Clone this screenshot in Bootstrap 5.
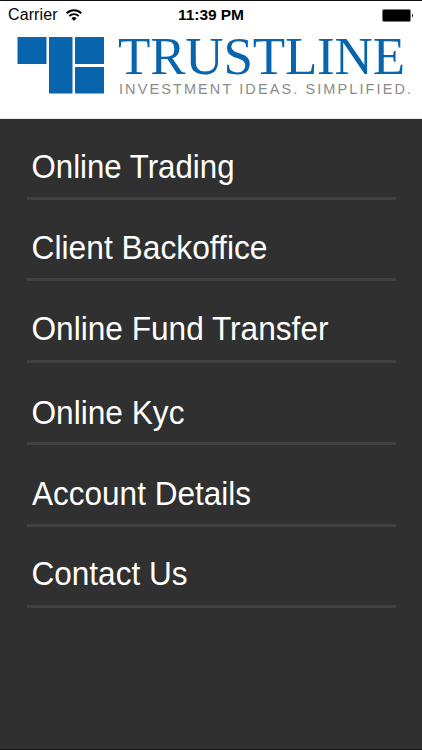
<!DOCTYPE html>
<html lang="en">
<head>
<meta charset="utf-8">
<meta name="viewport" content="width=device-width, initial-scale=1">
<title>Trustline</title>
<link href="https://cdn.jsdelivr.net/npm/bootstrap@5.3.0/dist/css/bootstrap.min.css" rel="stylesheet">
<style>
  body { background: #303030; font-family: "Liberation Sans", Arial, sans-serif; }
  .screen { height: 750px; border-top: 1px solid #111; border-bottom: 1px solid #111; }
  .brand-header { height: 118px; background: #fff; border-bottom: 1px solid #e8e8e8; }
  .status-bar { height: 28px; padding: 0 8px; font-size: 16px; color: #000; }
  .status-bar > div { flex: 1 1 0; }
  .carrier { letter-spacing: .1px; }
  .clock { font-size: 15.5px; letter-spacing: -.05px; }
  .brand-logo { overflow: visible; }
  .menu-list { padding: 0 26px 0 27px; }
  .menu-row { height: 81.75px; border-bottom: 3px solid #414042; padding: 0 5px 7px; color: #fff; font-size: 32.5px; line-height: 42px; }
  .menu-row:first-child { height: 80.5px; }
  .menu-row:hover { color: #fff; }
  .menu-row text { fill: #fff; }
</style>
</head>
<body>
<div class="screen d-flex flex-column overflow-hidden">
  <header class="brand-header flex-shrink-0">
    <div class="status-bar d-flex align-items-center">
      <div class="d-flex align-items-center">
        <span class="carrier">Carrier</span>
        <svg class="ms-2" width="16" height="13" viewBox="0 0 16 13" fill="none" stroke="#000" stroke-width="1.9">
          <path d="M.7 4.300a10.300 10.300 0 0 1 14.600 0M3.300 7.100a6.650 6.650 0 0 1 9.400 0"/>
          <path d="M8 12 5.400 9.200a3.700 3.700 0 0 1 5.200 0z" fill="#000" stroke="none"/>
        </svg>
      </div>
      <div class="clock text-center fw-bold text-nowrap">11:39 PM</div>
      <div class="d-flex justify-content-end">
        <svg width="32" height="13" viewBox="0 0 32 13">
          <rect x=".5" y=".5" width="28" height="12" rx="1.5" stroke="#777"/>
          <path d="M30 4.500q2 2 0 4z"/>
        </svg>
      </div>
    </div>
    <svg class="brand-logo d-block" width="422" height="88" viewBox="0 29 422 88" role="img" aria-label="Trustline">
      <g fill="#0865ad">
        <path d="M17.500 37h29v27h-29zM49 37h23.500v56.500H49zM75 37h29v27H75zM75 67h29v26.500H75z"/>
        <text x="118" y="74" font-family="Liberation Serif, Times New Roman, serif" font-size="53" textLength="287">TRUSTLINE</text>
      </g>
      <text x="119" y="93.500" fill="#8b8b8b" font-size="14.500" textLength="292">INVESTMENT IDEAS. SIMPLIFIED.</text>
    </svg>
  </header>
  <nav class="menu-list">
    <a href="#" class="menu-row d-flex align-items-end text-decoration-none"><svg width="340" height="42"><text x="-.5" y="29.500" textLength="203" lengthAdjust="spacingAndGlyphs">Online Trading</text></svg></a>
    <a href="#" class="menu-row d-flex align-items-end text-decoration-none"><svg width="340" height="42"><text x="-.5" y="29.500" textLength="236" lengthAdjust="spacingAndGlyphs">Client Backoffice</text></svg></a>
    <a href="#" class="menu-row d-flex align-items-end text-decoration-none"><svg width="340" height="42"><text x="-.5" y="28.500" textLength="297" lengthAdjust="spacingAndGlyphs">Online Fund Transfer</text></svg></a>
    <a href="#" class="menu-row d-flex align-items-end text-decoration-none"><svg width="340" height="42"><text x="-.5" y="30.700" textLength="153" lengthAdjust="spacingAndGlyphs">Online Kyc</text></svg></a>
    <a href="#" class="menu-row d-flex align-items-end text-decoration-none"><svg width="340" height="42"><text x="0" y="29.700" textLength="219" lengthAdjust="spacingAndGlyphs">Account Details</text></svg></a>
    <a href="#" class="menu-row d-flex align-items-end text-decoration-none"><svg width="340" height="42"><text x="-.5" y="28.800" textLength="156" lengthAdjust="spacingAndGlyphs">Contact Us</text></svg></a>
  </nav>
</div>
<script src="https://cdn.jsdelivr.net/npm/bootstrap@5.3.0/dist/js/bootstrap.bundle.min.js"></script>
</body>
</html>
